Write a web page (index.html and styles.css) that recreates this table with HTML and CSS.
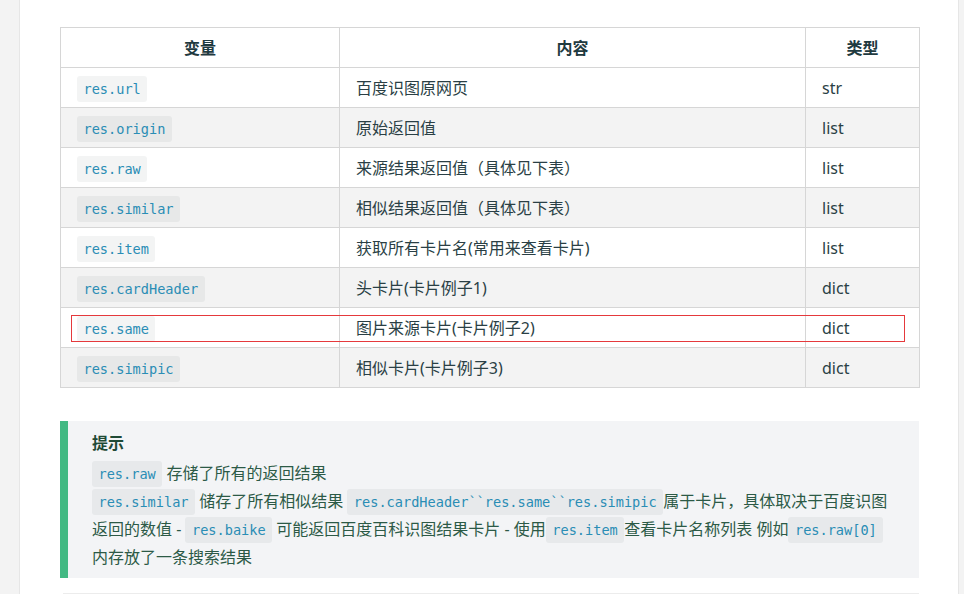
FILE: index.html
```html
<!DOCTYPE html>
<html lang="zh-CN">
<head>
<meta charset="utf-8">
<title>res 变量说明</title>
<link rel="stylesheet" href="styles.css">
</head>
<body>
<div class="page">
  <main class="content">
    <div class="table-wrap">
      <table class="vars">
        <colgroup>
          <col class="c1"><col class="c2"><col class="c3">
        </colgroup>
        <thead>
          <tr><th>变量</th><th>内容</th><th>类型</th></tr>
        </thead>
        <tbody>
          <tr><td><code>res.url</code></td><td>百度识图原网页</td><td>str</td></tr>
          <tr><td><code>res.origin</code></td><td>原始返回值</td><td>list</td></tr>
          <tr><td><code>res.raw</code></td><td>来源结果返回值（具体见下表）</td><td>list</td></tr>
          <tr><td><code>res.similar</code></td><td>相似结果返回值（具体见下表）</td><td>list</td></tr>
          <tr><td><code>res.item</code></td><td>获取所有卡片名(常用来查看卡片)</td><td>list</td></tr>
          <tr><td><code>res.cardHeader</code></td><td>头卡片(卡片例子1)</td><td>dict</td></tr>
          <tr><td><code>res.same</code></td><td>图片来源卡片(卡片例子2)</td><td>dict</td></tr>
          <tr><td><code>res.simipic</code></td><td>相似卡片(卡片例子3)</td><td>dict</td></tr>
        </tbody>
      </table>
      <div class="highlight-box"></div>
    </div>

    <div class="tip">
      <p class="tip-title">提示</p>
      <p class="tip-body"><code>res.raw</code> 存储了所有的返回结果<br><code>res.similar</code> 储存了所有相似结果 <code>res.cardHeader``res.same``res.simipic</code>属于卡片，具体取决于百度识图<br>返回的数值 - <code>res.baike</code> 可能返回百度百科识图结果卡片 - 使用<code>res.item</code>查看卡片名称列表 例如<code>res.raw[0]</code><br>内存放了一条搜索结果</p>
    </div>

    <div class="next-block"></div>
  </main>
</div>
</body>
</html>
```

FILE: styles.css
```css
html, body {
  margin: 0;
  padding: 0;
}
body {
  background: #f3f3f3;
  font-family: "Noto Sans", "Noto Sans CJK SC", sans-serif;
  font-size: 16px;
  color: #2a3f45;
  height: 594px;
  overflow: hidden;
}
.page {
  margin-left: 19px;
  width: 938px;
  height: 594px;
  background: #ffffff;
  border-left: 1px solid #e6e6e6;
  border-right: 1px solid #e6e6e6;
}
.content {
  padding: 27px 39px 0 40px;
}
.table-wrap {
  position: relative;
}
.vars {
  width: 859px;
  border-collapse: collapse;
  table-layout: fixed;
}
.c1 { width: 279px; }
.c2 { width: 466px; }
.c3 { width: 114px; }
.vars th, .vars td {
  border: 1px solid #d6d6d6;
  padding: 9px 16px 7px;
  line-height: 23px;
  height: 23px;
  white-space: nowrap;
}
.vars th {
  font-weight: 700;
  text-align: center;
  color: #1f3a40;
}
.vars td {
  text-align: left;
}
.vars tbody tr:nth-child(2n) {
  background: #f3f3f3;
}
code {
  font-family: "DejaVu Sans Mono", monospace;
  font-size: 13.6px;
  line-height: 1;
  color: #2a8db5;
  background: rgba(27, 31, 35, 0.05);
  padding: 5px 6.5px;
  border-radius: 3px;
}
.highlight-box {
  position: absolute;
  left: 11px;
  top: 288px;
  width: 834px;
  height: 27px;
  box-sizing: border-box;
  border: 1px solid #e5393c;
  pointer-events: none;
}
.tip {
  margin-top: 33px;
  background: #f3f4f6;
  border-left: 8px solid #42b983;
  padding: 8px 24px 7px;
  color: #2c5a46;
}
.tip p {
  margin: 0;
  line-height: 28px;
}
.tip-title {
  font-weight: 700;
  color: #1f4a36;
}
.tip-body {
  margin-top: 2px !important;
}
.tip code {
  background: rgba(27, 31, 35, 0.05);
}
.next-block {
  margin-top: 15px;
  margin-left: 3px;
  border-top: 1px solid #ececec;
  height: 10px;
}
```
